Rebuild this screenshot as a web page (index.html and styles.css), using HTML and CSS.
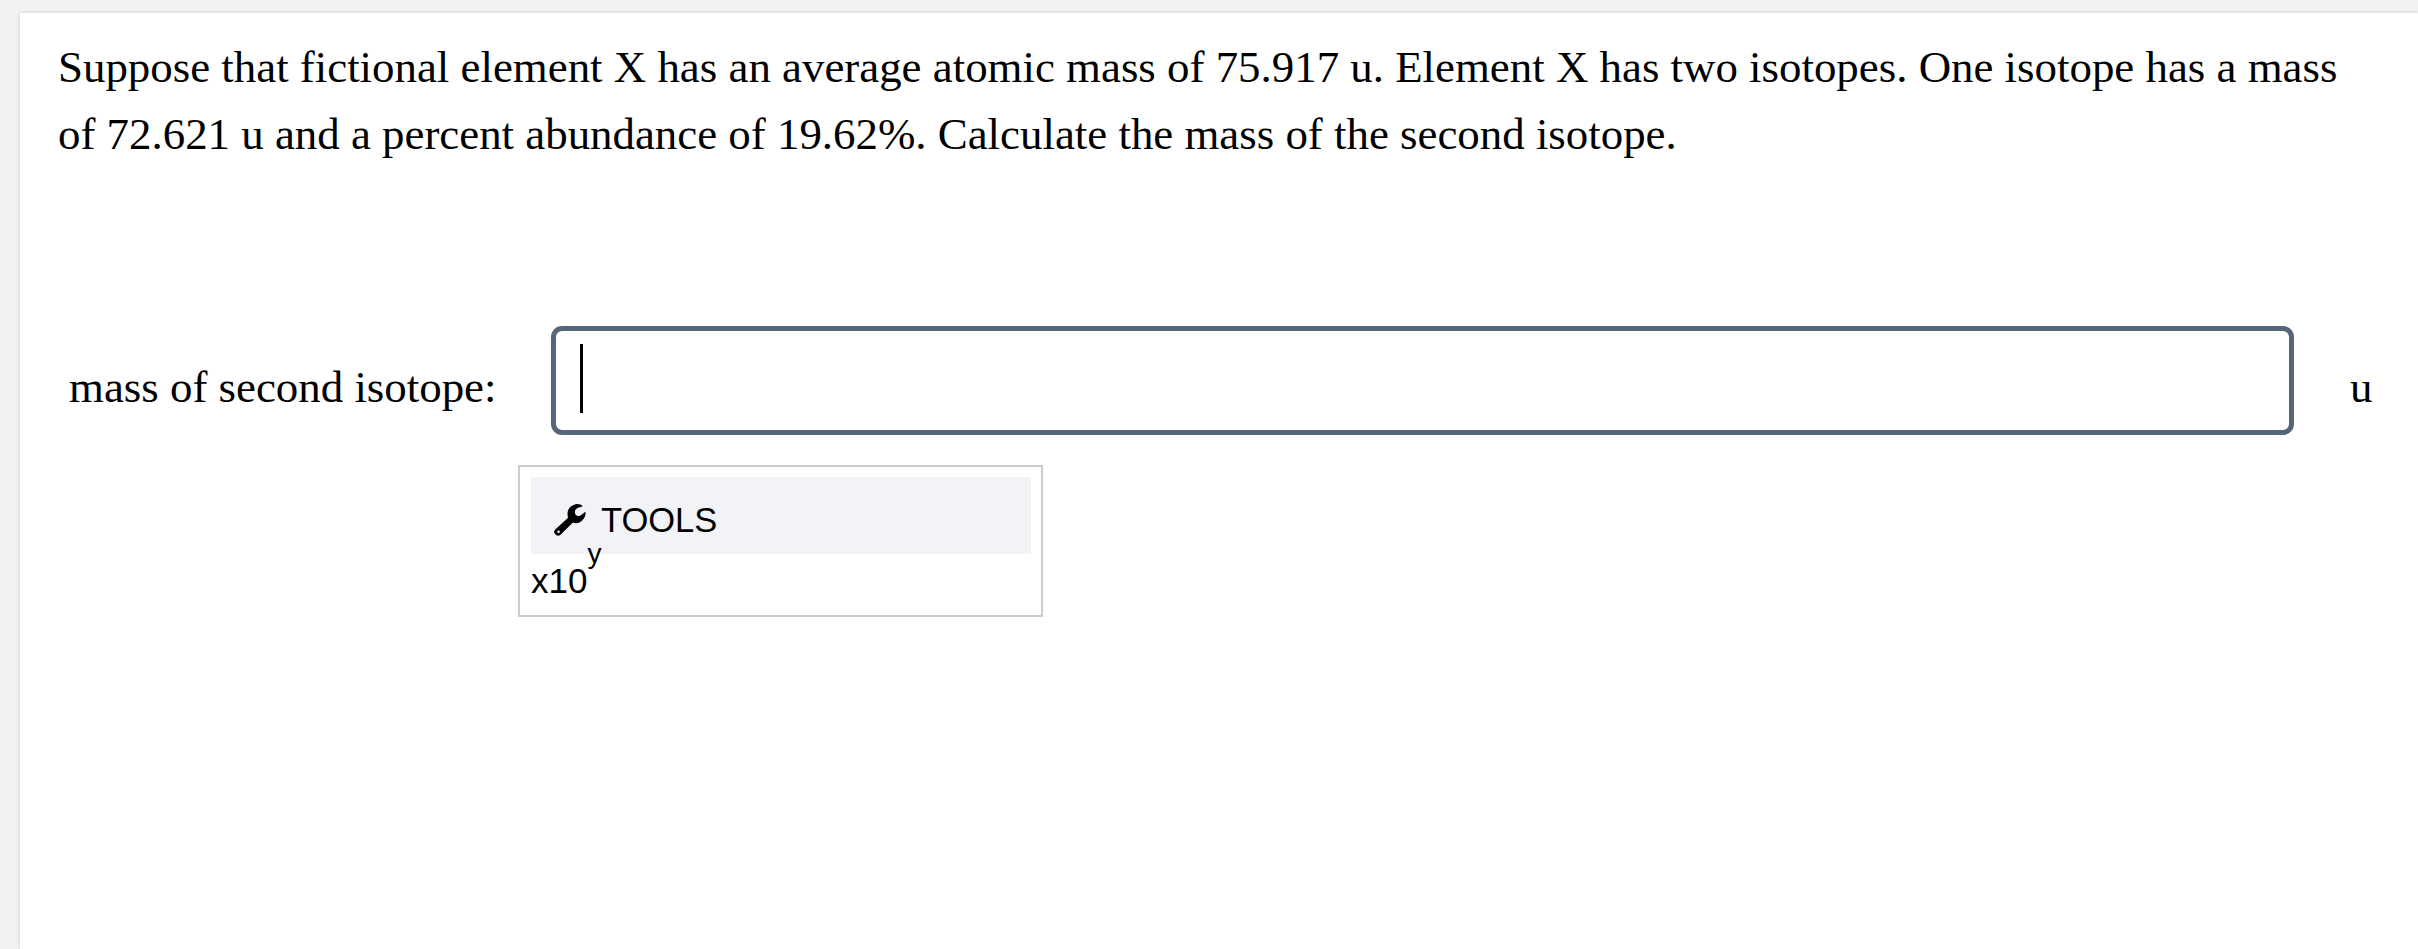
FILE: index.html
```html
<!DOCTYPE html>
<html lang="en">
<head>
<meta charset="utf-8">
<title>Question</title>
<link rel="stylesheet" href="styles.css">
</head>
<body>
<main class="card">
  <p class="question">Suppose that fictional element X has an average atomic mass of 75.917 u. Element X has two isotopes. One isotope has a mass of 72.621 u and a percent abundance of 19.62%. Calculate the mass of the second isotope.</p>
  <div class="answer-row">
    <label class="answer-label">mass of second isotope:</label>
    <div class="answer-input"><span class="caret"></span></div>
    <span class="answer-unit">u</span>
  </div>
  <div class="tools">
    <div class="tools-head">
      <svg class="wrench" viewBox="0 0 98 98" aria-hidden="true"><path fill-rule="evenodd" d="M3 79 L43 42 C38 25 44 6 66 1 C74 -1 84 2 88 7 L72 12 C64 16 62 26 66 32 C70 38 80 38 85 32 L96 24 C99 34 92 48 82 54 C74 59 66 60 58 57 L20 94 C15 98 8 98 4 93 C0 89 -1 83 3 79 Z M14 81 A4 4 0 1 0 14 89 A4 4 0 1 0 14 81 Z"/></svg>
      <span>TOOLS</span>
    </div>
    <div class="tools-item">x10<sup class="tools-sup">y</sup></div>
  </div>
</main>
</body>
</html>
```
FILE: styles.css
```css
html, body {
  margin: 0;
  height: 100%;
}
body {
  background: #f2f2f2;
  color: #000;
  font-family: "Liberation Serif", "Times New Roman", serif;
  overflow: hidden;
  display: flex;
  flex-direction: column;
}
.card {
  flex: 1;
  margin: 13px 0 0 20px;
  padding: 21px 0 0 38px;
  background: #fff;
  box-shadow: 0 0 4px rgba(0, 0, 0, 0.15);
}
.question {
  margin: 0;
  max-width: 2300px;
  font-size: 44.88px;
  line-height: 67px;
}
.answer-row {
  display: flex;
  align-items: center;
  margin-top: 158px;
  padding-left: 11px;
}
.answer-label {
  font-size: 44.88px;
  width: 482px;
  flex: none;
  padding-top: 12px;
}
.answer-input {
  box-sizing: border-box;
  width: 1743px;
  height: 109px;
  flex: none;
  border: 5px solid #56667a;
  border-radius: 11px;
  padding: 13px 0 0 24px;
}
.caret {
  display: block;
  width: 3px;
  height: 69px;
  background: #000;
}
.answer-unit {
  font-size: 44.88px;
  margin-left: 56px;
  padding-top: 12px;
}
.tools {
  box-sizing: border-box;
  width: 525px;
  height: 152px;
  margin: 30px 0 0 460px;
  border: 2px solid #ccc;
  padding: 10px;
  font-family: "Liberation Sans", Arial, sans-serif;
  font-size: 34.5px;
}
.tools-head {
  box-sizing: border-box;
  display: flex;
  align-items: center;
  gap: 15px;
  height: 77px;
  margin-left: 1px;
  padding: 9px 0 0 23px;
  background: #f2f3f7;
}
.wrench {
  width: 32px;
  height: 32px;
  fill: #000;
}
.tools-item {
  font-size: 35px;
  line-height: 50px;
  margin-left: 1px;
}
.tools-sup {
  font-size: 28px;
  line-height: 0;
  vertical-align: 30px;
}
```
